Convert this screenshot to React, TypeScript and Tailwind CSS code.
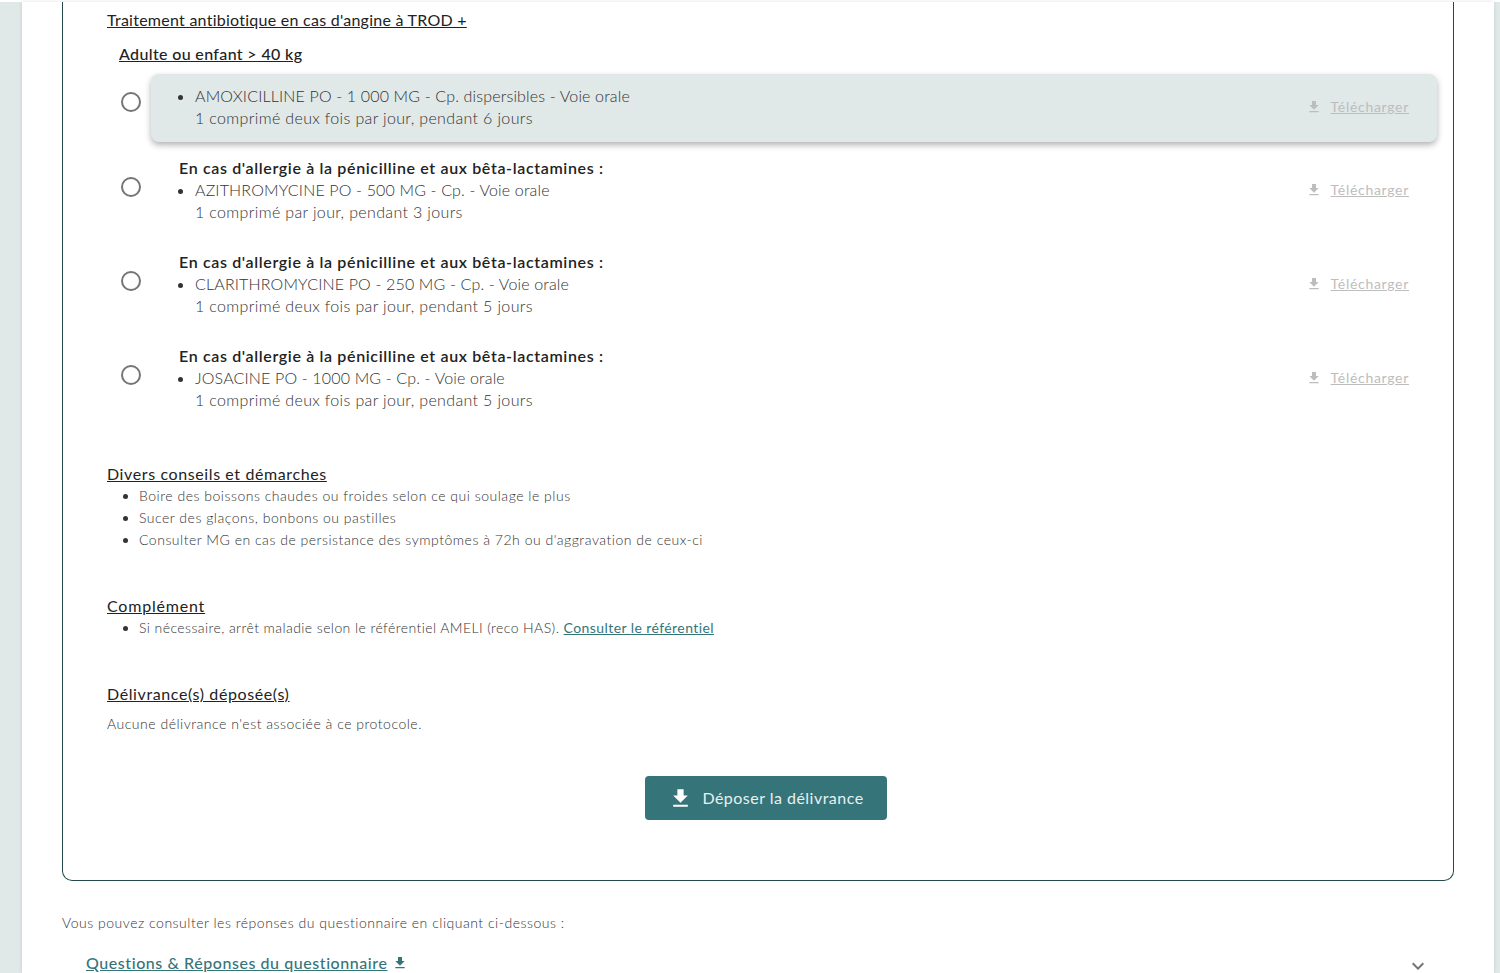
import React from 'react';

const font = { fontFamily: 'Lato, sans-serif' };

type Treatment = {
  allergy?: boolean;
  name: string;
  dose: string;
};

const treatments: Treatment[] = [
  { name: 'AMOXICILLINE PO - 1 000 MG - Cp. dispersibles - Voie orale', dose: '1 comprimé deux fois par jour, pendant 6 jours' },
  { allergy: true, name: 'AZITHROMYCINE PO - 500 MG - Cp. - Voie orale', dose: '1 comprimé par jour, pendant 3 jours' },
  { allergy: true, name: 'CLARITHROMYCINE PO - 250 MG - Cp. - Voie orale', dose: '1 comprimé deux fois par jour, pendant 5 jours' },
  { allergy: true, name: 'JOSACINE PO - 1000 MG - Cp. - Voie orale', dose: '1 comprimé deux fois par jour, pendant 5 jours' },
];

function DownloadIcon({ className }: { className: string }) {
  return (
    <svg viewBox="0 0 24 24" fill="currentColor" className={className}>
      <path d="M19 9h-4V3H9v6H5l7 7 7-7zM5 18v2h14v-2H5z" />
    </svg>
  );
}

function SectionTitle({ children }: { children: React.ReactNode }) {
  return <h3 className="text-[16px] leading-[22px] font-normal text-[#222] underline tracking-[0.038em]">{children}</h3>;
}

function TreatmentRow({ item, selected }: { item: Treatment; selected: boolean }) {
  return (
    <div className="flex items-center">
      <div className={`w-[20px] h-[20px] rounded-full border-2 border-[#757575] shrink-0 ${selected ? 'mb-[12px]' : 'mb-[6px]'}`} />
      <div className={`ml-[10px] flex-1 flex items-center justify-between rounded-[8px] pl-[28px] pr-[28px] pt-[11px] ${selected ? 'pb-[13px] bg-[#e0e8e8] shadow-[0_3px_6px_rgba(0,0,0,0.3)]' : 'pb-[11px]'}`}>
        <div className="text-[16px] leading-[22px] text-[#333] font-light">
          {item.allergy && <div className="font-semibold text-[#222] tracking-[0.04em]">En cas d'allergie à la pénicilline et aux bêta-lactamines :</div>}
          <ul className="list-disc pl-[16px]">
            <li>
              <span className="tracking-[0.01em]">{item.name}</span>
              <br />
              <span className="tracking-[0.022em]">{item.dose}</span>
            </li>
          </ul>
        </div>
        <a className="flex items-center text-[#bdbdbd]">
          <DownloadIcon className="w-[16px] h-[16px]" />
          <span className="ml-[9px] text-[14px] leading-[22px] underline tracking-[0.05em]">Télécharger</span>
        </a>
      </div>
    </div>
  );
}

export default function App() {
  return (
    <div className="h-[973px] overflow-hidden bg-white pt-[2px]" style={font}>
      <div className="bg-[#e0e8e8] pl-[22px] pr-[6px] h-full">
        <div className="bg-white h-full px-[40px] shadow-[0_0_4px_rgba(0,0,0,0.12)]">
          <div className="border border-t-0 border-[#24494d] rounded-b-[10px] pl-[44px] pr-[16px] pt-[7px] h-[879px]">
            <h3 className="text-[16px] leading-[22px] font-normal text-[#222] underline tracking-[0.016em]">Traitement antibiotique en cas d'angine à TROD +</h3>
            <div className="ml-[12px] mt-[12px]">
              <h4 className="text-[16px] leading-[22px] font-medium text-[#222] underline tracking-[0.022em]">Adulte ou enfant &gt; 40 kg</h4>
              <div className="mt-[9px] ml-[2px] flex flex-col gap-[6px]">
                {treatments.map((t, i) => (
                  <div key={t.name} className={i === 1 ? '-mt-[2px]' : ''}>
                    <TreatmentRow item={t} selected={i === 0} />
                  </div>
                ))}
              </div>
            </div>

            <div className="mt-[41px]">
              <SectionTitle>Divers conseils et démarches</SectionTitle>
              <ul className="list-disc pl-[32px] text-[14px] leading-[22px] text-[#333] font-light tracking-[0.037em]">
                <li>Boire des boissons chaudes ou froides selon ce qui soulage le plus</li>
                <li>Sucer des glaçons, bonbons ou pastilles</li>
                <li>Consulter MG en cas de persistance des symptômes à 72h ou d'aggravation de ceux-ci</li>
              </ul>
            </div>

            <div className="mt-[44px]">
              <h3 className="text-[16px] leading-[22px] font-normal text-[#222] underline tracking-[0.05em]">Complément</h3>
              <ul className="list-disc pl-[32px] text-[14px] leading-[22px] text-[#333] font-light tracking-[0.03em]">
                <li>
                  Si nécessaire, arrêt maladie selon le référentiel AMELI (reco HAS).{' '}
                  <a className="text-[#35757a] underline font-normal tracking-[0.03em]">Consulter le référentiel</a>
                </li>
              </ul>
            </div>

            <div className="mt-[44px]">
              <SectionTitle>Délivrance(s) déposée(s)</SectionTitle>
              <p className="mt-[8px] text-[14px] leading-[22px] text-[#333] font-light tracking-[0.037em]">Aucune délivrance n'est associée à ce protocole.</p>
            </div>

            <div className="mt-[41px] flex justify-center pr-[12px]">
              <button className="w-[242px] h-[44px] bg-[#35757a] rounded-[4px] text-white flex items-center justify-center">
                <DownloadIcon className="w-[25px] h-[25px]" />
                <span className="ml-[9px] text-[16px] font-normal tracking-[0.03em] text-[#e8f0f0]">Déposer la délivrance</span>
              </button>
            </div>
          </div>

          <p className="mt-[31px] text-[14px] leading-[22px] text-[#333] font-light tracking-[0.037em]">Vous pouvez consulter les réponses du questionnaire en cliquant ci-dessous :</p>

          <div className="mt-[14px] flex items-center justify-between pl-[24px] pr-[24px]">
            <div className="flex items-center text-[#35757a]">
              <span className="text-[16px] leading-[22px] font-medium underline tracking-[0.035em]">Questions &amp; Réponses du questionnaire</span>
              <DownloadIcon className="ml-[5px] w-[16px] h-[16px]" />
            </div>
            <svg viewBox="0 0 24 24" fill="#757575" className="w-[24px] h-[24px] mt-[6px]">
              <path d="M16.59 8.59 12 13.17 7.41 8.59 6 10l6 6 6-6z" />
            </svg>
          </div>
        </div>
      </div>
    </div>
  );
}
